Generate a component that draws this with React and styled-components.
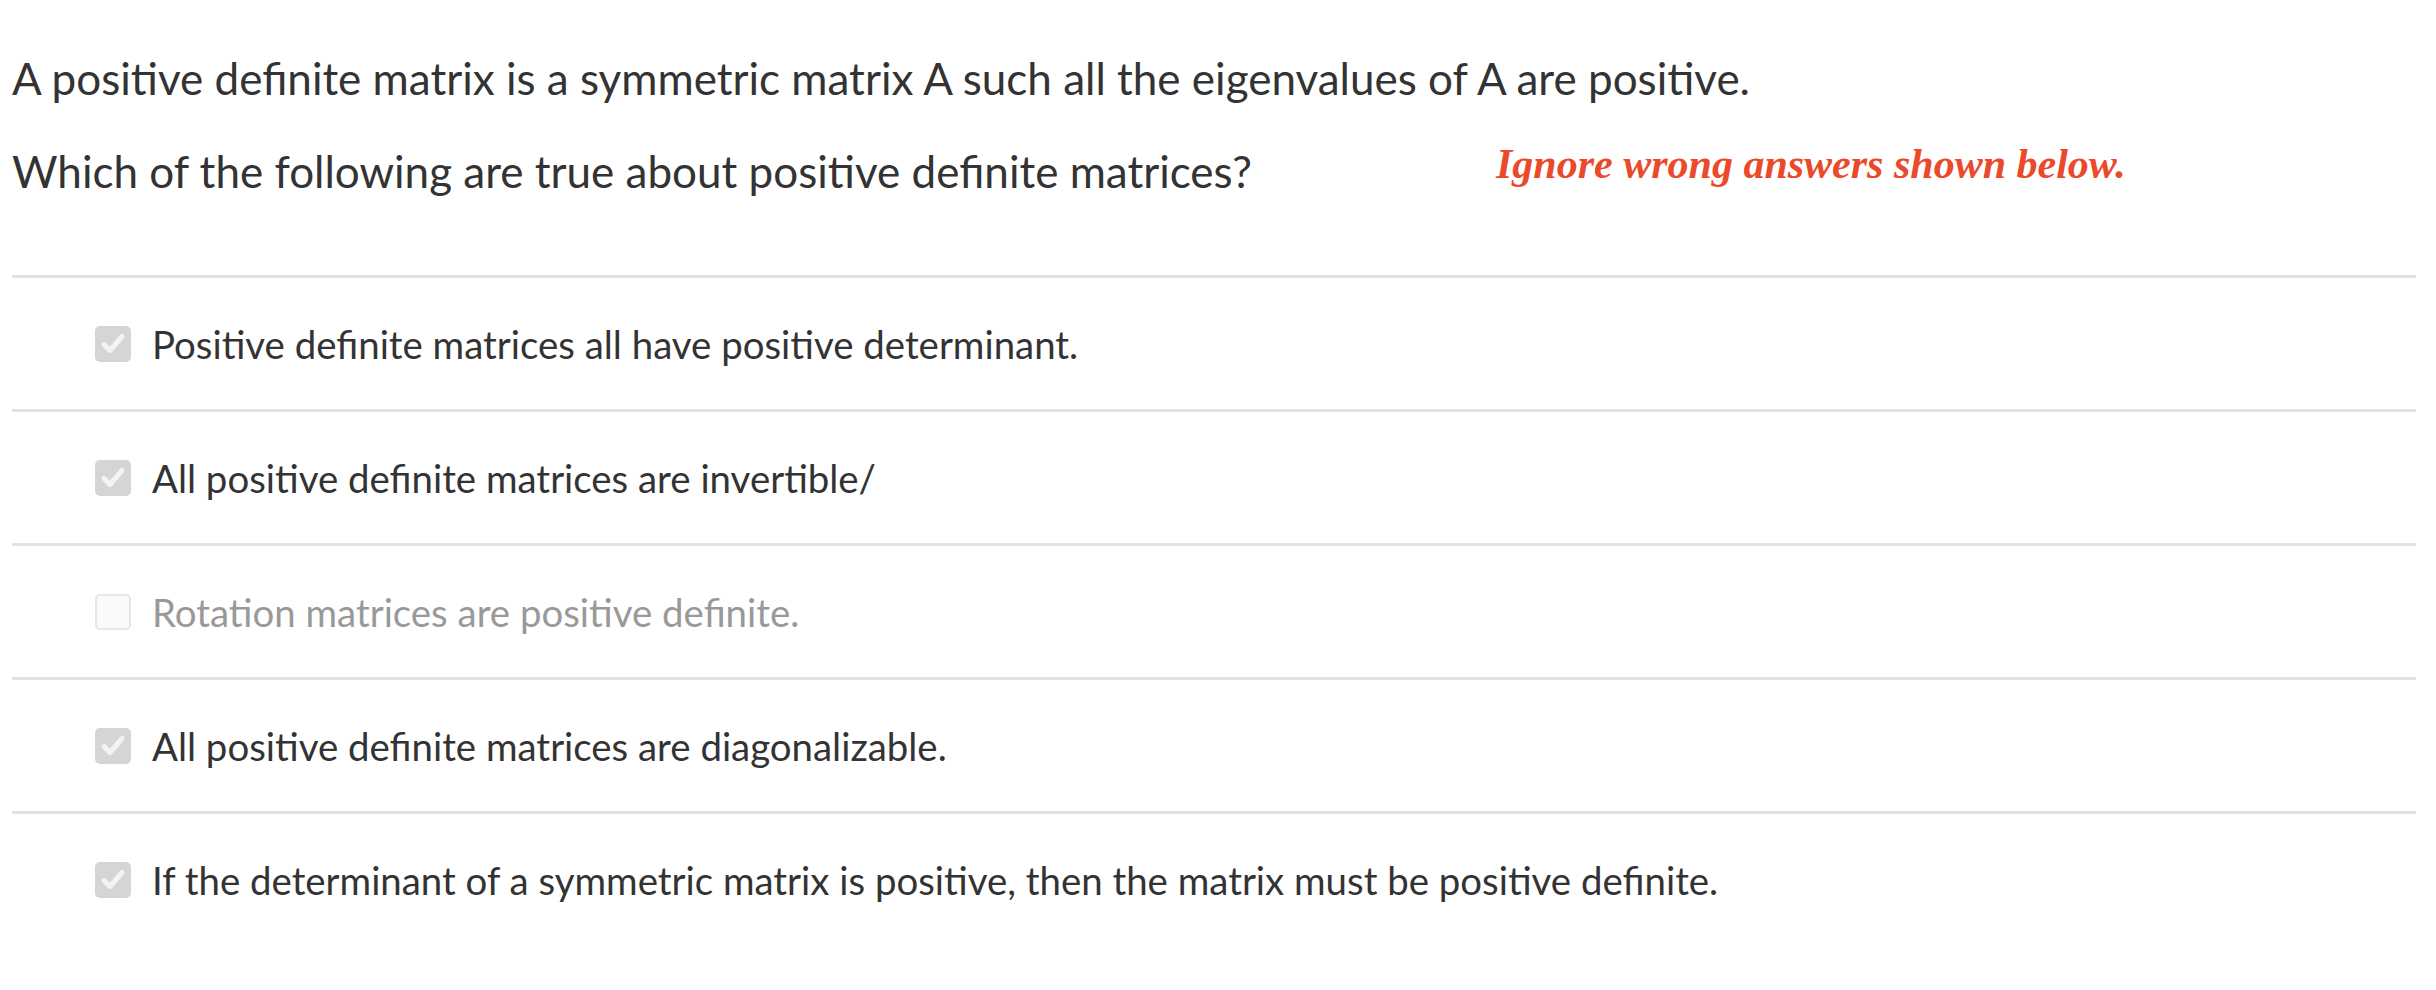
import React from 'react'
import styled, { createGlobalStyle } from 'styled-components';

const GlobalStyle = createGlobalStyle`
    body {
        margin: 0;
        background: #fff;
        font-family: Lato, "Open Sans", sans-serif;
        color: #333;
    }
`;

const answers = [
    { text: 'Positive definite matrices all have positive determinant.', checked: true },
    { text: 'All positive definite matrices are invertible/', checked: true },
    { text: 'Rotation matrices are positive definite.', checked: false },
    { text: 'All positive definite matrices are diagonalizable.', checked: true },
    { text: 'If the determinant of a symmetric matrix is positive, then the matrix must be positive definite.', checked: true },
];

function App() {
  return (
    <Container>
        <GlobalStyle />
        <Question>
            <p>A positive definite matrix is a symmetric matrix A such all the eigenvalues of A are positive.</p>
            <Prompt>
                <p>Which of the following are true about positive definite matrices?</p>
                <Note>Ignore wrong answers shown below.</Note>
            </Prompt>
        </Question>
        <Answers>
            {answers.map((a) => (
                <Answer key={a.text} checked={a.checked}>
                    <Box checked={a.checked}>
                        {a.checked && (
                            <svg width="28" height="28" viewBox="0 0 28 28">
                                <path d="M5 14.5 L11 20.5 L23 6.5" fill="none" stroke="#f3f3f3" strokeWidth="5" strokeLinecap="round" strokeLinejoin="round" />
                            </svg>
                        )}
                    </Box>
                    <span>{a.text}</span>
                </Answer>
            ))}
        </Answers>
    </Container>
  )
}

const Container = styled.div`
    padding: 0 20px 0 12px;
`;

const Question = styled.div`
    padding-top: 54px;
    padding-bottom: 80px;
    border-bottom: 3px solid #e2e2e2;

    p {
        margin: 0;
        font-size: 44px;
        line-height: 48px;
    }
`;

const Prompt = styled.div`
    display: grid;
    grid-template-columns: 1484px auto;
    align-items: center;
    margin-top: 45px;
`;

const Note = styled.span`
    font-family: "Liberation Serif", "Times New Roman", serif;
    font-style: italic;
    font-weight: bold;
    font-size: 42px;
    color: #ea4a2b;
    margin-top: -14px;
`;

const Answers = styled.div`
    display: flex;
    flex-direction: column;
`;

const Answer = styled.label`
    display: flex;
    align-items: center;
    gap: 21px;
    height: 131px;
    padding-left: 83px;
    border-bottom: 3px solid #e2e2e2;
    font-size: 38.4px;
    color: ${(p) => (p.checked ? '#333' : '#999')};

    &:last-child {
        border-bottom: none;
    }
`;

const Box = styled.span`
    width: 36px;
    height: 36px;
    box-sizing: border-box;
    border-radius: 5px;
    display: flex;
    align-items: center;
    justify-content: center;
    flex-shrink: 0;
    background: ${(p) => (p.checked ? '#d5d5d5' : '#fafafa')};
    border: ${(p) => (p.checked ? 'none' : '2px solid #e6e6e6')};
`;

export default App
